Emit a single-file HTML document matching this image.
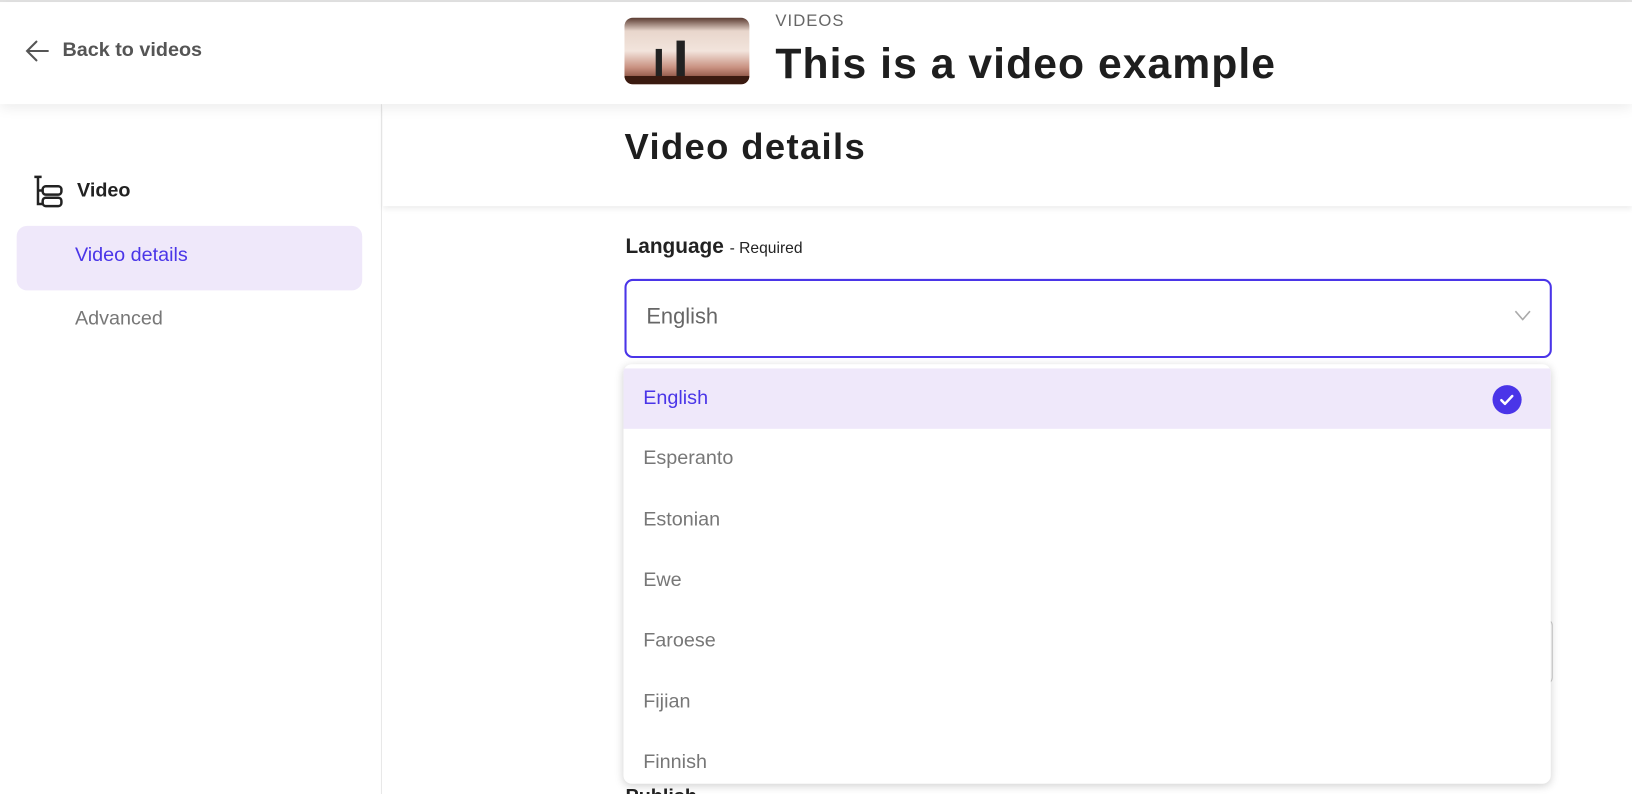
<!DOCTYPE html>
<html><head><meta charset="utf-8"><style>
*{box-sizing:border-box;margin:0;padding:0}
html,body{width:1632px;height:794px;overflow:hidden;background:#fff}
#w{width:1568px;height:763px;transform:scale(1.0408);transform-origin:0 0;position:relative;font-family:"Liberation Sans",sans-serif;color:#222}
.topbar{position:absolute;left:0;top:0;width:1568px;height:2px;background:#e2e2e2}
.header{position:absolute;left:0;top:2px;width:1568px;height:98px;background:#fff;box-shadow:0 4px 12px rgba(0,0,0,.08);z-index:3}
.back{position:absolute;left:24px;top:36px;font-size:19px;font-weight:bold;color:#555;display:flex;align-items:center;gap:12px}
.thumb{position:absolute;left:600px;top:15px;width:120px;height:64px;border-radius:8px;overflow:hidden;background:linear-gradient(180deg,#5a3a30 0%,#e8d6cc 20%,#f2e4dc 50%,#c89080 75%,#6a3020 100%)}
.kicker{position:absolute;left:745px;top:10px;font-size:16px;color:#666;letter-spacing:1px}
.title{position:absolute;left:745px;top:36px;font-size:41px;font-weight:bold;color:#1e1e1e;letter-spacing:1px}
.side{position:absolute;left:0;top:100px;width:367px;height:694px;border-right:1px solid #e8e8e8}
.vid{position:absolute;left:32px;top:168px;font-size:19px;font-weight:bold;display:flex;align-items:center;gap:12px}
.sel{position:absolute;left:16px;top:217px;width:332px;height:62px;background:#efe8fa;border-radius:10px;color:#4a35e8;font-size:19px;padding:18px 0 0 56px}
.adv{position:absolute;left:72px;top:296px;font-size:19px;color:#777}
.chead{position:absolute;left:368px;top:100px;width:1200px;height:98px;box-shadow:0 3px 5px rgba(0,0,0,.07);background:#fff}
.h2{position:absolute;left:600px;top:122px;font-size:35px;font-weight:bold;color:#1e1e1e;letter-spacing:1.3px}
.lab{position:absolute;left:601px;top:226px;font-size:20px;font-weight:bold}
.lab span{font-size:15px;font-weight:normal}
.input{position:absolute;left:600px;top:268px;width:891px;height:76px;border:2px solid #4a35e8;border-radius:8px;font-size:21px;color:#666;padding:23px 0 0 19px}
.input svg{position:absolute;right:18px;top:28px}
.ghost{position:absolute;left:1480px;top:595px;width:12px;height:62px;border:1px solid #ccc;border-left:none;border-radius:0 6px 6px 0}
.dd{position:absolute;left:599px;top:350px;width:891px;height:403px;background:#fff;border-radius:8px;box-shadow:0 2px 8px rgba(0,0,0,.18);overflow:hidden}
.opt{height:58.3px;font-size:19px;color:#777;padding-left:19px;display:flex;align-items:center}
.opt.on{background:#efe8fa;color:#4a35e8;position:relative;margin-top:4px}
.check{position:absolute;right:28px;top:16px;width:28px;height:28px;border-radius:50%;background:#4a35e8}
.bottom{position:absolute;left:601px;top:755px;font-size:19px;font-weight:bold;color:#222}
</style></head><body><div id="w">
<div class="topbar"></div>
<div class="side"></div>
<div class="chead"></div>
<div class="header">
 <div class="back"><svg width="24" height="22" viewBox="0 0 24 22" fill="none" stroke="#555" stroke-width="2" stroke-linecap="round"><path d="M22 11H2M11 2L2 11l9 9"/></svg>Back to videos</div>
 <div class="thumb"><div style="position:absolute;left:50px;top:22px;width:8px;height:38px;background:#222"></div><div style="position:absolute;left:30px;top:30px;width:6px;height:30px;background:#222"></div><div style="position:absolute;left:0;bottom:0;width:120px;height:8px;background:#3a1a10"></div></div>
 <div class="kicker">VIDEOS</div>
 <div class="title">This is a video example</div>
</div>
<div class="vid"><svg width="30" height="32" viewBox="0 0 30 32" fill="none" stroke="#222" stroke-width="2.4"><path d="M1 2h7M4.5 2v26h4"/><rect x="9" y="11" width="18" height="8" rx="3"/><rect x="9" y="22" width="18" height="8" rx="3"/><path d="M4.5 15h4.5"/></svg>Video</div>
<div class="sel">Video details</div>
<div class="adv">Advanced</div>
<div class="h2">Video details</div>
<div class="lab">Language <span>- Required</span></div>
<div class="input">English<svg width="16" height="10" viewBox="0 0 16 10" fill="none" stroke="#aaa" stroke-width="1.5"><path d="M1 1l7 8 7-8"/></svg></div>
<div class="ghost"></div>
<div class="bottom">Publish</div>
<div class="dd">
 <div class="opt on">English<div class="check"><svg width="28" height="28" viewBox="0 0 28 28" fill="none" stroke="#fff" stroke-width="2.4" stroke-linecap="round" stroke-linejoin="round"><path d="M8.5 14.5l3.5 3.5 7-7.5"/></svg></div></div>
 <div class="opt">Esperanto</div>
 <div class="opt">Estonian</div>
 <div class="opt">Ewe</div>
 <div class="opt">Faroese</div>
 <div class="opt">Fijian</div>
 <div class="opt">Finnish</div>
</div>
</div></body></html>
